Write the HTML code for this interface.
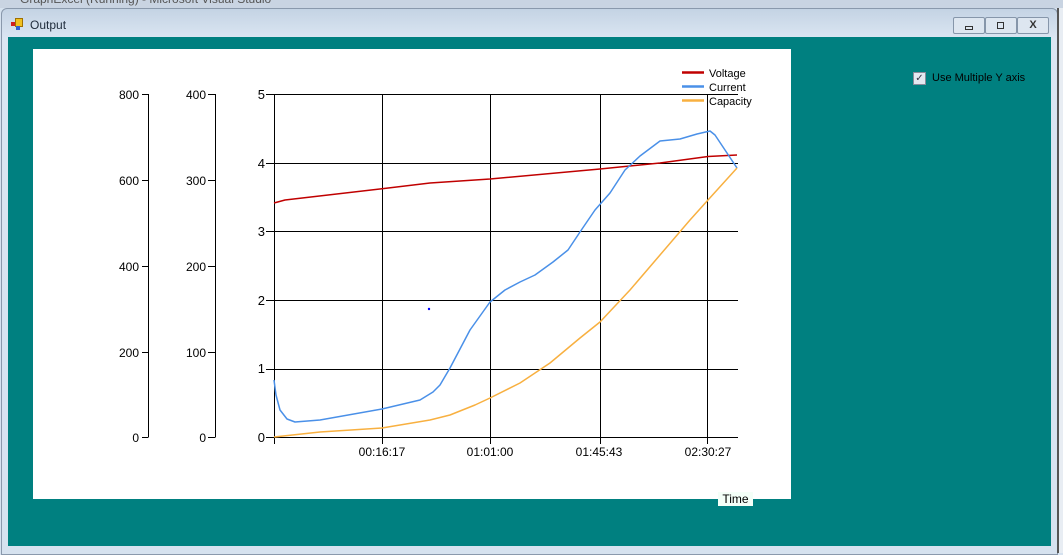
<!DOCTYPE html>
<html><head><style>
body{margin:0;width:1063px;height:553px;overflow:hidden;background:#d6e2ef;font-family:"Liberation Sans",sans-serif;position:relative}
</style></head><body>
<div style="position:absolute;left:0;top:0;width:1063px;height:8px;background:#c9d4e2;overflow:hidden"><div style="position:absolute;left:20px;top:-8px;font-size:12px;color:#555">GraphExcel (Running) - Microsoft Visual Studio</div></div>
<div style="position:absolute;left:1px;top:8px;width:1055px;height:545px;background:linear-gradient(#c4d3e4,#dbe6f2 30px,#d6e2ef);border:1px solid #8a99ac;border-radius:6px 6px 0 0"></div>
<div style="position:absolute;left:1057px;top:8px;width:6px;height:545px;background:#e8edf3;border-left:2px solid #555"></div>
<div style="position:absolute;left:11px;top:18px;width:11px;height:13px">
<div style="position:absolute;left:4px;top:0;width:6px;height:7px;background:#f0c020;border:1px solid #a07000"></div>
<div style="position:absolute;left:0;top:4px;width:4px;height:4px;background:#d02020"></div>
<div style="position:absolute;left:5px;top:8px;width:4px;height:4px;background:#3060d0"></div></div>
<div style="position:absolute;left:30px;top:18px;font-size:12px;color:#1e2a3a">Output</div>
<div style="position:absolute;left:953px;top:17px;width:30px;height:15px;border:1px solid #8696aa;border-radius:2px;background:#dde6f0"><div style="position:absolute;left:11px;top:8px;width:6px;height:2px;border:1px solid #333"></div></div>
<div style="position:absolute;left:985px;top:17px;width:30px;height:15px;border:1px solid #8696aa;border-radius:2px;background:#dde6f0"><div style="position:absolute;left:11px;top:4px;width:5px;height:5px;border:1px solid #333"></div></div>
<div style="position:absolute;left:1017px;top:17px;width:30px;height:15px;border:1px solid #8696aa;border-radius:2px;background:#dde6f0;font-size:11px;text-align:center;line-height:15px;color:#333;font-weight:bold">X</div>
<div style="position:absolute;left:8px;top:37px;width:1043px;height:509px;background:#008080"></div>
<div style="position:absolute;left:33px;top:49px;width:758px;height:450px;background:#fff"></div>
<div style="position:absolute;left:718px;top:492px;width:35px;height:14px;background:#f4fff8;font-size:12px;color:#000;text-align:center;line-height:15px">Time</div>
<div style="position:absolute;left:913px;top:72px;width:11px;height:11px;background:#e4e8f0;border:1px solid #8a8a9a;font-size:10px;line-height:11px;text-align:center;color:#334">✓</div>
<div style="position:absolute;left:932px;top:72px;font-size:11px;color:#000">Use Multiple Y axis</div>
<svg style="position:absolute;left:0;top:0" width="1063" height="553" font-family="Liberation Sans" font-size="12">
<g stroke="#000" stroke-width="1" fill="none" shape-rendering="crispEdges">
<path d="M148.5 94V437.5M142 94.5H148M142 180.5H148M142 266.5H148M142 352.5H148M142 437.5H148"/>
<path d="M215.5 94V437.5M208 94.5H215M208 180.5H215M208 266.5H215M208 352.5H215M208 437.5H215"/>
<path d="M274.5 94V444M266 94.5H738M266 163.5H738M266 231.5H738M266 300.5H738M266 369.5H738M266 437.5H738"/>
<path d="M382.5 94V444M490.5 94V444M600.5 94V444M707.5 94V444"/>
</g>
<g text-anchor="end" fill="#000">
<text x="139" y="99">800</text><text x="139" y="185">600</text><text x="139" y="271">400</text><text x="139" y="357">200</text><text x="139" y="442">0</text>
<text x="206" y="99">400</text><text x="206" y="185">300</text><text x="206" y="271">200</text><text x="206" y="357">100</text><text x="206" y="442">0</text>
<text x="265" y="99" font-size="13">5</text><text x="265" y="168" font-size="13">4</text><text x="265" y="236" font-size="13">3</text><text x="265" y="305" font-size="13">2</text><text x="265" y="373" font-size="13">1</text><text x="265" y="442" font-size="13">0</text>
</g>
<g text-anchor="middle"><text x="382" y="456">00:16:17</text><text x="490" y="456">01:01:00</text><text x="599" y="456">01:45:43</text><text x="708" y="456">02:30:27</text></g>
<g fill="none" stroke-width="1.5" stroke-linejoin="round">
<path stroke="#c00000" d="M274 203L285 200L382 188.7L430 183L490 179L600 169L660 163L708 156.5L737 155"/>
<path stroke="#4a90e8" d="M274 380L276 395L280 410L287 419L295 422L320 420L382 409L420 400L433 392L440 385L450 368L470 330L490 302L505 290L520 282L535 275L553 262L568 250L580 232L595 210L610 193L625 170L640 156L660 141L680 139L697 134L710 131L715 135L737 168"/>
<path stroke="#f8b040" d="M274 437L320 432L382 428L430 420L450 415L475 405L490 398L520 383L550 363L580 338L600 322L630 290L660 255L690 220L708 200L737 168"/>
<path stroke="#c00000" stroke-width="2.5" d="M682 72.5H704"/>
<path stroke="#4a90e8" stroke-width="2.5" d="M682 86.5H704"/>
<path stroke="#f8b040" stroke-width="2.5" d="M682 100.5H704"/>
</g>
<circle cx="429" cy="309" r="1.2" fill="#0000ff"/>
<g font-size="11"><text x="709" y="77">Voltage</text><text x="709" y="91">Current</text><text x="709" y="105">Capacity</text></g>
</svg>
</body></html>
